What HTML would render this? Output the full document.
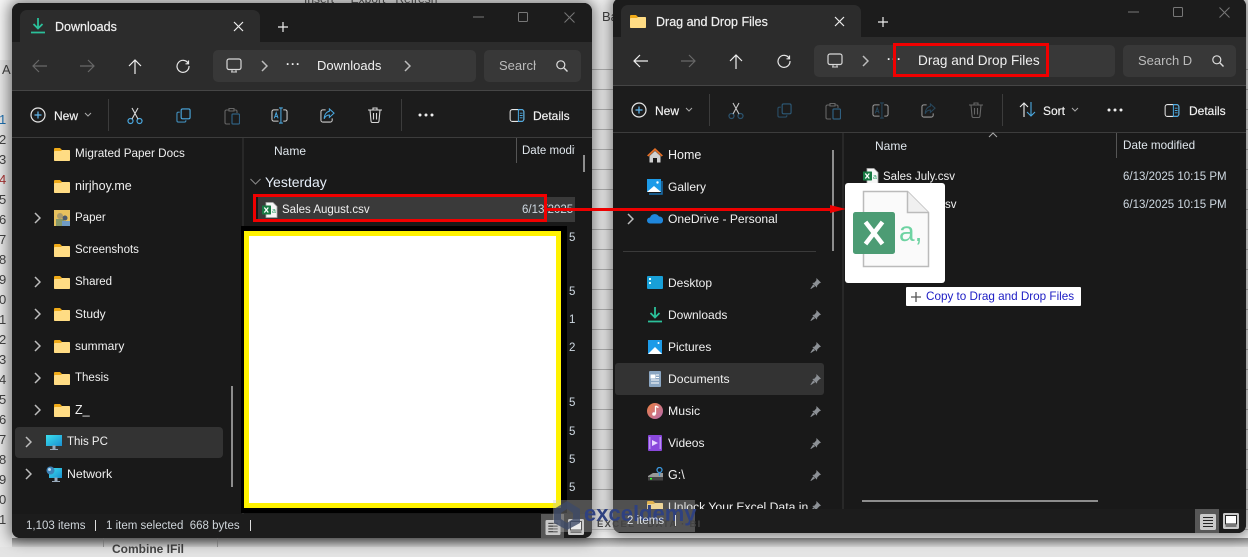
<!DOCTYPE html>
<html><head><meta charset="utf-8"><title>Drag and Drop Files</title>
<style>
html,body{margin:0;padding:0}
body{width:1248px;height:547px;overflow:hidden;position:relative;background:#e4e4e4;font-family:"Liberation Sans",sans-serif;font-size:12px;color:#f0f0f0}
.a,.t,svg{position:absolute}
.t{line-height:16px;white-space:nowrap}
.win{position:absolute;background:#191919;box-shadow:0 0 14px 3px rgba(0,0,0,.5);overflow:hidden}
.hl{position:absolute;background:#1c1c1c}
.n{color:#444;font-size:13px}
.f{font-size:11.5px}
</style></head><body>
<svg width="0" height="0" style="position:absolute">
<defs>
<symbol id="fo" viewBox="0 0 16 14"><path d="M0 2a1 1 0 0 1 1-1h5l2 2h7a1 1 0 0 1 1 1v9a1 1 0 0 1-1 1H1a1 1 0 0 1-1-1z" fill="#efaa18"/><path d="M0 5a1 1 0 0 1 1-1h6l1-1h7a1 1 0 0 1 1 1v9a1 1 0 0 1-1 1H1a1 1 0 0 1-1-1z" fill="#ffdc84"/></symbol>
<symbol id="ch" viewBox="0 0 8 12"><path d="M2 1l5 5-5 5" fill="none" stroke="#bdbdbd" stroke-width="1.5"/></symbol>
<symbol id="xl" viewBox="0 0 16 16"><path d="M4 .5h7l4 4v11H4z" fill="#f6f6f6" stroke="#aaa" stroke-width=".8"/><rect y="3.5" width="9" height="9" rx=".6" fill="#177a43"/><path d="M2.3 5.5l4 5m0-5l-4 5" stroke="#fff" stroke-width="1.3"/><text x="10" y="11" font-size="7" fill="#2f9e68" font-family="Liberation Sans">a</text></symbol>
<symbol id="pin" viewBox="0 0 12 12"><path d="M7 0l5 5-1.500 .6-2.500 2.500-.5 2.400-5-5 2.400-.5L7 2.500zM3.500 7l-3 4.500 .5 .5 4.500-3z" fill="#8c9095"/></symbol>
<symbol id="mon" viewBox="0 0 16 16"><rect x="1" y="1" width="14" height="10.500" rx="2" fill="none" stroke="#d8d8d8" stroke-width="1.2"/><path d="M5 14h6M6 12v2M10 12v2" stroke="#d8d8d8"/></symbol>
<symbol id="sc" viewBox="0 0 16 18"><circle cx="3.500" cy="14" r="2.500" fill="none" stroke="currentColor" stroke-width="1.200"/><circle cx="12.500" cy="14" r="2.500" fill="none" stroke="currentColor" stroke-width="1.200"/><path d="M5 12L11 1M11 12L5 1" fill="none" stroke="#d9d9d9" stroke-width="1.100"/></symbol>
<symbol id="cp" viewBox="0 0 16 16"><rect x="5.500" y="1" width="9.500" height="10.500" rx="1.500" fill="none" stroke="currentColor" stroke-width="1.200"/><path d="M4 4.500H2.500A1.500 1.500 0 0 0 1 6v7.500A1.500 1.500 0 0 0 2.500 15H9a1.500 1.500 0 0 0 1.500-1.500V13" fill="none" stroke="currentColor" stroke-width="1.200" opacity=".8"/></symbol>
<symbol id="pa" viewBox="0 0 16 18"><path d="M5 3H2.500A1.500 1.500 0 0 0 1 4.500v11A1.500 1.500 0 0 0 2.500 17H6M5 1.500h5V4H5zM10 3h1.500A1.500 1.500 0 0 1 13 4.500V6" fill="none" stroke="#666" stroke-width="1.100"/><rect x="8" y="7" width="7.500" height="10" rx="1" fill="none" stroke="#2f5f80" stroke-width="1.200"/></symbol>
<symbol id="re" viewBox="0 0 18 18"><path d="M8 3H3a2 2 0 0 0-2 2v8a2 2 0 0 0 2 2h5M13 3h2a2 2 0 0 1 2 2v8a2 2 0 0 1-2 2h-2" fill="none" stroke="#cfcfcf" stroke-width="1.100"/><path d="M8.500 1h4M10.500 1v16M8.500 17h4" fill="none" stroke="currentColor" stroke-width="1.100"/><path d="M3.500 12l2-6 2 6M4.300 10h2.500" fill="none" stroke="currentColor" stroke-width="1"/></symbol>
<symbol id="sh" viewBox="0 0 16 16"><path d="M6 2H3a2 2 0 0 0-2 2v9a2 2 0 0 0 2 2h8a2 2 0 0 0 2-2v-2" fill="none" stroke="#cfcfcf" stroke-width="1.100"/><path d="M10 1l5 4.500-5 4.500V7.500C7 7.500 5.500 9 4.500 11.500 4.500 7 7 4 10 3.500z" fill="none" stroke="currentColor" stroke-width="1.100"/></symbol>
<symbol id="tr" viewBox="0 0 14 16"><path d="M0 3h14M5 3V1h4v2M2 3l1 11a1.500 1.500 0 0 0 1.500 1.500h5A1.500 1.500 0 0 0 11 14l1-11M5.500 6v6.500M8.500 6v6.500" fill="none" stroke="currentColor" stroke-width="1.100"/></symbol>
<symbol id="de" viewBox="0 0 16 14"><rect x=".6" y=".6" width="14.800" height="12.800" rx="2.500" fill="none" stroke="#e6e6e6" stroke-width="1.100"/><path d="M9.500 .6h3.400a2.500 2.500 0 0 1 2.500 2.500v7.800a2.500 2.500 0 0 1-2.500 2.500H9.500z" fill="none" stroke="#4aa8e0" stroke-width="1.100"/><path d="M11 4.500h3M11 7h3M11 9.500h3" stroke="#4aa8e0"/></symbol>
<symbol id="nw" viewBox="0 0 16 16"><circle cx="8" cy="8" r="7" fill="none" stroke="#e6e6e6" stroke-width="1.200"/><path d="M8 4.500v7M4.500 8h7" stroke="#62b8f0" stroke-width="1.200"/></symbol>
<symbol id="vl" viewBox="0 0 16 16"><rect width="16" height="16" rx="1.500" fill="#c9c9c9"/><path d="M3 3.500h10M3 6.500h10M3 9.500h10M3 12.500h10" stroke="#222" stroke-width="1"/></symbol>
<symbol id="vt" viewBox="0 0 16 16"><rect width="16" height="16" rx="1.500" fill="#c9c9c9"/><rect x="2.500" y="2.500" width="11" height="8.500" fill="#fff" stroke="#222"/><path d="M2.500 13h11" stroke="#222"/></symbol>
<symbol id="rf" viewBox="0 0 14 14"><path d="M12.300 4.500A6 6 0 1 0 13 7M9.500 4.800h3V1.500" fill="none" stroke="#e6e6e6" stroke-width="1.200"/></symbol>
<symbol id="mg" viewBox="0 0 12 12"><circle cx="4.800" cy="4.800" r="4" fill="none" stroke="#dcdcdc" stroke-width="1.200"/><path d="M7.800 7.800L11.500 11.500" stroke="#dcdcdc" stroke-width="1.400"/></symbol>
<symbol id="dl" viewBox="0 0 14 16"><path d="M7 0v10M2.500 6L7 10.500 11.500 6M0 14.500h14" fill="none" stroke="#2bc09a" stroke-width="1.800"/></symbol>
</defs></svg>

<!-- background spreadsheet -->
<div class="a" style="left:0;top:0;width:1248px;height:547px;background:repeating-linear-gradient(180deg,#f4f4f4 0 19px,#b9b9b9 19px 20px);background-position:0 10px"></div>
<div class="a" style="left:0;top:0;width:1248px;height:60px;background:#f5f5f5"></div>
<div class="a" style="left:0;top:538px;width:1248px;height:9px;background:linear-gradient(180deg,#8d8d8d,#d5d5d5)"></div>
<div class="a" style="left:103px;top:538px;width:1px;height:9px;background:#999"></div>
<div class="a" style="left:217px;top:538px;width:1px;height:9px;background:#999"></div>
<div class="a" style="left:0;top:60px;width:12px;height:487px;background:#e8e8e8"></div>
<div class="t n" style="left:2px;top:62px">A</div>
<div class="t n" style="left:-1px;top:112px;color:#1c6fb0">1</div>
<div class="t n" style="left:-1px;top:132px">2</div>
<div class="t n" style="left:-1px;top:152px">3</div>
<div class="t n" style="left:-1px;top:172px;color:#a33">4</div>
<div class="t n" style="left:-1px;top:192px">5</div>
<div class="t n" style="left:-1px;top:212px">6</div>
<div class="t n" style="left:-1px;top:232px">7</div>
<div class="t n" style="left:-1px;top:252px">8</div>
<div class="t n" style="left:-1px;top:272px">9</div>
<div class="t n" style="left:-1px;top:292px">0</div>
<div class="t n" style="left:-1px;top:312px">1</div>
<div class="t n" style="left:-1px;top:332px">2</div>
<div class="t n" style="left:-1px;top:352px">3</div>
<div class="t n" style="left:-1px;top:372px">4</div>
<div class="t n" style="left:-1px;top:392px">5</div>
<div class="t n" style="left:-1px;top:412px">6</div>
<div class="t n" style="left:-1px;top:432px">7</div>
<div class="t n" style="left:-1px;top:452px">8</div>
<div class="t n" style="left:-1px;top:472px">9</div>
<div class="t n" style="left:-1px;top:492px">0</div>
<div class="t n" style="left:-1px;top:512px">1</div>
<div class="t" style="left:304px;top:-9px;color:#555">Insert &nbsp; &nbsp; Export &nbsp; Refresh</div>
<div class="t n" style="left:602px;top:9px">Ba</div>
<div class="t" style="left:112px;top:541px;font-weight:bold;color:#444">Combine IFil</div>

<!-- LEFT WINDOW -->
<div class="win" style="left:12px;top:3px;width:580px;height:535px;border-radius:8px">
<div class="hl" style="left:0;top:0;width:580px;height:39px"></div>
<div class="a" style="left:8px;top:7px;width:240px;height:32px;background:#2c2c2c;border-radius:7px 7px 0 0"></div>
<div class="a" style="left:0;top:39px;width:580px;height:48px;background:#2c2c2c"></div>
<div class="a" style="left:0;top:87px;width:580px;height:1px;background:#454545"></div>
<div class="hl" style="left:0;top:88px;width:580px;height:46px"></div>
<div class="a" style="left:0;top:134px;width:580px;height:1px;background:#3c3c3c"></div>
<div class="a" style="left:201px;top:47px;width:263px;height:32px;background:#383838;border-radius:5px"></div>
<div class="a" style="left:472px;top:47px;width:97px;height:32px;background:#383838;border-radius:5px"></div>
<div class="a" style="left:230px;top:135px;width:2px;height:376px;background:#282828"></div>
<div class="hl" style="left:0;top:511px;width:580px;height:24px"></div>
</div>
<svg style="left:31px;top:18px" width="14" height="16"><use href="#dl"/></svg>
<div class="t" style="left:55px;top:19px;font-size:12.500px;-webkit-text-stroke:.2px #f0f0f0">Downloads</div>
<svg style="left:233px;top:21px" width="11" height="11"><path d="M1 1l9 9m0-9l-9 9" stroke="#eee" stroke-width="1.200"/></svg>
<svg style="left:277px;top:21px" width="12" height="12"><path d="M6 1v10M1 6h10" stroke="#eee" stroke-width="1.200"/></svg>
<svg style="left:473px;top:16px" width="11" height="3"><path d="M0 1h11" stroke="#777"/></svg>
<svg style="left:518px;top:12px" width="10" height="10"><rect x=".5" y=".5" width="9" height="9" rx="1" fill="none" stroke="#777"/></svg>
<svg style="left:564px;top:12px" width="11" height="11"><path d="M.5 .5l10 10m0-10l-10 10" stroke="#777"/></svg>
<svg style="left:32px;top:59px" width="15" height="14"><path d="M15 7H1M7 1L1 7l6 6" fill="none" stroke="#686868" stroke-width="1.200"/></svg>
<svg style="left:80px;top:59px" width="15" height="14"><path d="M0 7h14M8 1l6 6-6 6" fill="none" stroke="#686868" stroke-width="1.200"/></svg>
<svg style="left:128px;top:59px" width="14" height="15"><path d="M7 15V1M1 7l6-6 6 6" fill="none" stroke="#eee" stroke-width="1.200"/></svg>
<svg style="left:176px;top:59px" width="14" height="14"><use href="#rf"/></svg>
<svg style="left:226px;top:58px" width="16" height="16"><use href="#mon"/></svg>
<svg style="left:260px;top:60px" width="8" height="12"><use href="#ch"/></svg>
<div class="t" style="left:286px;top:56px;font-size:12px;font-weight:bold;letter-spacing:1px">···</div>
<div class="t" style="left:317px;top:58px;font-size:13px">Downloads</div>
<svg style="left:403px;top:60px" width="8" height="12"><use href="#ch"/></svg>
<div class="t" style="left:499px;top:58px;width:37px;overflow:hidden;font-size:13px;color:#bbb">Search</div>
<svg style="left:556px;top:60px" width="12" height="12"><use href="#mg"/></svg>

<svg style="left:30px;top:107px" width="16" height="16"><use href="#nw"/></svg>
<div class="t" style="left:54px;top:108px;-webkit-text-stroke:.15px #fff">New</div>
<svg style="left:84px;top:112px" width="8" height="6"><path d="M1 1l3 3 3-3" fill="none" stroke="#aaa"/></svg>
<div class="a" style="left:108px;top:99px;width:1px;height:32px;background:#3c3c3c"></div>
<svg style="left:127px;top:107px;color:#4aa8e0" width="16" height="18"><use href="#sc"/></svg>
<svg style="left:176px;top:108px;color:#4aa8e0" width="15" height="15"><use href="#cp"/></svg>
<svg style="left:224px;top:107px" width="16" height="18"><use href="#pa"/></svg>
<svg style="left:271px;top:107px;color:#4aa8e0" width="17" height="17"><use href="#re"/></svg>
<svg style="left:320px;top:108px;color:#4aa8e0" width="15" height="15"><use href="#sh"/></svg>
<svg style="left:368px;top:107px;color:#d8d8d8" width="14" height="16"><use href="#tr"/></svg>
<div class="a" style="left:401px;top:99px;width:1px;height:32px;background:#3c3c3c"></div>
<svg style="left:418px;top:113px" width="16" height="4"><circle cx="2" cy="2" r="1.500" fill="#eee"/><circle cx="8" cy="2" r="1.500" fill="#eee"/><circle cx="14" cy="2" r="1.500" fill="#eee"/></svg>
<svg style="left:509px;top:109px" width="16" height="13"><use href="#de"/></svg>
<div class="t" style="left:533px;top:108px;-webkit-text-stroke:.15px #fff">Details</div>

<svg style="left:54px;top:147px" width="16" height="14"><use href="#fo"/></svg><div class="t" style="left:75px;top:146px;font-size:11.700px">Migrated Paper Docs</div>
<svg style="left:54px;top:179px" width="16" height="14"><use href="#fo"/></svg><div class="t" style="left:75px;top:178px;font-size:12.500px">nirjhoy.me</div>
<svg style="left:33px;top:212px" width="8" height="12"><use href="#ch"/></svg>
<svg style="left:54px;top:210px" width="16" height="16"><rect width="16" height="16" fill="#e7c15e"/><circle cx="6" cy="6" r="3" fill="#a99a6c"/><rect x="2" y="9" width="8" height="7" fill="#86986a"/><circle cx="11" cy="8" r="2.500" fill="#4b5a6c"/><rect x="8" y="11" width="8" height="5" fill="#6f9bc4"/></svg><div class="t f" style="left:75px;top:210px">Paper</div>
<svg style="left:54px;top:243px" width="16" height="14"><use href="#fo"/></svg><div class="t f" style="left:75px;top:242px">Screenshots</div>
<svg style="left:33px;top:276px" width="8" height="12"><use href="#ch"/></svg><svg style="left:54px;top:275px" width="16" height="14"><use href="#fo"/></svg><div class="t f" style="left:75px;top:274px">Shared</div>
<svg style="left:33px;top:308px" width="8" height="12"><use href="#ch"/></svg><svg style="left:54px;top:307px" width="16" height="14"><use href="#fo"/></svg><div class="t" style="left:75px;top:306px">Study</div>
<svg style="left:33px;top:340px" width="8" height="12"><use href="#ch"/></svg><svg style="left:54px;top:339px" width="16" height="14"><use href="#fo"/></svg><div class="t" style="left:75px;top:338px">summary</div>
<svg style="left:33px;top:372px" width="8" height="12"><use href="#ch"/></svg><svg style="left:54px;top:371px" width="16" height="14"><use href="#fo"/></svg><div class="t f" style="left:75px;top:370px">Thesis</div>
<svg style="left:33px;top:404px" width="8" height="12"><use href="#ch"/></svg><svg style="left:54px;top:403px" width="16" height="14"><use href="#fo"/></svg><div class="t" style="left:75px;top:402px;font-size:12.500px">Z_</div>
<div class="a" style="left:15px;top:427px;width:208px;height:31px;background:#333;border-radius:4px"></div>
<svg style="left:24px;top:436px" width="8" height="12"><use href="#ch"/></svg>
<svg style="left:46px;top:435px" width="16" height="16"><defs><linearGradient id="pc" x1="0" y1="0" x2="1" y2="1"><stop offset="0" stop-color="#3be0ee"/><stop offset="1" stop-color="#1a8fd0"/></linearGradient></defs><rect width="16" height="11" fill="url(#pc)"/><path d="M7 11h2v3H7zM4 14.500h8" stroke="#9ab" fill="#9ab"/></svg>
<div class="t f" style="left:67px;top:434px">This PC</div>
<svg style="left:24px;top:468px" width="8" height="12"><use href="#ch"/></svg>
<svg style="left:46px;top:466px" width="16" height="16"><rect x="3" y="2" width="13" height="10" fill="url(#pc)"/><circle cx="4.500" cy="4.500" r="4" fill="#3c83b8"/><circle cx="3.500" cy="3.500" r="1.500" fill="#b8d8f0"/><path d="M9 12h2v3H9zM6 15.500h8" stroke="#9ab" fill="#9ab"/></svg>
<div class="t" style="left:67px;top:466px;font-size:12.300px">Network</div>
<div class="a" style="left:231px;top:386px;width:2px;height:101px;background:#8d8d8d"></div>

<div class="t" style="left:274px;top:143px;color:#dfe6ec">Name</div>
<div class="a" style="left:516px;top:138px;width:1px;height:25px;background:#555"></div>
<div class="t f" style="left:522px;top:143px;width:53px;overflow:hidden;color:#dfe6ec">Date modified</div>
<div class="a" style="left:583px;top:155px;width:2px;height:17px;background:#8d8d8d"></div>
<svg style="left:250px;top:178px" width="11" height="8"><path d="M.5 1L5.500 6l5-5" fill="none" stroke="#888" stroke-width="1.100"/></svg>
<div class="t" style="left:265px;top:174px;font-size:14px;color:#e6eef8">Yesterday</div>
<div class="a" style="left:258px;top:197px;width:317px;height:25px;background:#3a3a3a"></div>
<svg style="left:262px;top:202px" width="16" height="16"><use href="#xl"/></svg>
<div class="t f" style="left:282px;top:202px">Sales August.csv</div>
<div class="t f" style="left:522px;top:202px;width:53px;overflow:hidden;color:#cfd9e2">6/13/2025</div>
<div class="a" style="left:253px;top:194px;width:288px;height:22px;border:3px solid #f10000"></div>
<div class="a" style="left:241px;top:226px;width:326px;height:287px;background:#000"></div>
<div class="a" style="left:244px;top:231px;width:307px;height:267px;background:#fff;border:5px solid #fff200"></div>
<div class="t f" style="left:569px;top:230px;color:#cfd9e2">5</div>
<div class="t f" style="left:569px;top:284px;color:#cfd9e2">5</div>
<div class="t f" style="left:569px;top:312px;color:#cfd9e2">1</div>
<div class="t f" style="left:569px;top:340px;color:#cfd9e2">2</div>
<div class="t f" style="left:569px;top:395px;color:#cfd9e2">5</div>
<div class="t f" style="left:569px;top:424px;color:#cfd9e2">5</div>
<div class="t f" style="left:569px;top:452px;color:#cfd9e2">5</div>
<div class="t f" style="left:569px;top:480px;color:#cfd9e2">5</div>
<div class="t f" style="left:26px;top:518px;color:#cfd5da">1,103 items</div>
<div class="a" style="left:95px;top:520px;width:1px;height:11px;background:#ddd"></div>
<div class="t f" style="left:106px;top:518px;color:#cfd5da">1 item selected &nbsp;668 bytes</div>
<div class="a" style="left:250px;top:520px;width:1px;height:11px;background:#ddd"></div>
<div class="a" style="left:541px;top:514px;width:23px;height:24px;background:#575757"></div>
<svg style="left:545px;top:520px" width="16" height="15"><use href="#vl"/></svg>
<svg style="left:568px;top:519px" width="16" height="16"><use href="#vt"/></svg>

<!-- RIGHT WINDOW -->
<div class="win" style="left:613px;top:-2px;width:633px;height:535px;border-radius:8px">
<div class="hl" style="left:0;top:0;width:633px;height:39px"></div>
<div class="a" style="left:8px;top:7px;width:240px;height:32px;background:#2c2c2c;border-radius:7px 7px 0 0"></div>
<div class="a" style="left:0;top:39px;width:633px;height:48px;background:#2c2c2c"></div>
<div class="a" style="left:0;top:87px;width:633px;height:1px;background:#454545"></div>
<div class="hl" style="left:0;top:88px;width:633px;height:46px"></div>
<div class="a" style="left:0;top:134px;width:633px;height:1px;background:#3c3c3c"></div>
<div class="a" style="left:201px;top:47px;width:301px;height:32px;background:#383838;border-radius:5px"></div>
<div class="a" style="left:510px;top:47px;width:113px;height:32px;background:#383838;border-radius:5px"></div>
<div class="a" style="left:229px;top:135px;width:2px;height:376px;background:#282828"></div>
<div class="hl" style="left:0;top:511px;width:633px;height:24px"></div>
</div>
<svg style="left:630px;top:14px" width="16" height="14"><use href="#fo"/></svg>
<div class="t" style="left:656px;top:14px;font-size:12.500px;-webkit-text-stroke:.2px #f0f0f0">Drag and Drop Files</div>
<svg style="left:834px;top:16px" width="11" height="11"><path d="M1 1l9 9m0-9l-9 9" stroke="#eee" stroke-width="1.200"/></svg>
<svg style="left:877px;top:16px" width="12" height="12"><path d="M6 1v10M1 6h10" stroke="#eee" stroke-width="1.200"/></svg>
<svg style="left:1128px;top:11px" width="11" height="3"><path d="M0 1h11" stroke="#777"/></svg>
<svg style="left:1173px;top:7px" width="10" height="10"><rect x=".5" y=".5" width="9" height="9" rx="1" fill="none" stroke="#777"/></svg>
<svg style="left:1219px;top:7px" width="11" height="11"><path d="M.5 .5l10 10m0-10l-10 10" stroke="#777"/></svg>
<svg style="left:633px;top:54px" width="15" height="14"><path d="M15 7H1M7 1L1 7l6 6" fill="none" stroke="#eee" stroke-width="1.200"/></svg>
<svg style="left:681px;top:54px" width="15" height="14"><path d="M0 7h14M8 1l6 6-6 6" fill="none" stroke="#686868" stroke-width="1.200"/></svg>
<svg style="left:729px;top:54px" width="14" height="15"><path d="M7 15V1M1 7l6-6 6 6" fill="none" stroke="#eee" stroke-width="1.200"/></svg>
<svg style="left:777px;top:54px" width="14" height="14"><use href="#rf"/></svg>
<svg style="left:827px;top:53px" width="16" height="16"><use href="#mon"/></svg>
<svg style="left:861px;top:55px" width="8" height="12"><use href="#ch"/></svg>
<div class="t" style="left:887px;top:51px;font-size:12px;font-weight:bold;letter-spacing:1px">···</div>
<div class="t" style="left:918px;top:53px;font-size:13.600px">Drag and Drop Files</div>
<div class="a" style="left:893px;top:43px;width:150px;height:28px;border:3px solid #f10000"></div>
<div class="t" style="left:1138px;top:53px;width:54px;overflow:hidden;font-size:13px;color:#bbb">Search Drag</div>
<svg style="left:1212px;top:55px" width="12" height="12"><use href="#mg"/></svg>

<svg style="left:631px;top:102px" width="16" height="16"><use href="#nw"/></svg>
<div class="t" style="left:655px;top:103px;-webkit-text-stroke:.15px #fff">New</div>
<svg style="left:685px;top:107px" width="8" height="6"><path d="M1 1l3 3 3-3" fill="none" stroke="#aaa"/></svg>
<div class="a" style="left:709px;top:94px;width:1px;height:32px;background:#3c3c3c"></div>
<svg style="left:728px;top:102px;color:#2d5a78;opacity:.9" width="16" height="18"><use href="#sc"/></svg>
<svg style="left:777px;top:103px;color:#2d5a78" width="15" height="15"><use href="#cp"/></svg>
<svg style="left:825px;top:102px" width="16" height="18"><use href="#pa"/></svg>
<svg style="left:872px;top:102px;color:#2d5a78;opacity:.7" width="17" height="17"><use href="#re"/></svg>
<svg style="left:921px;top:103px;color:#2d5a78;opacity:.7" width="15" height="15"><use href="#sh"/></svg>
<svg style="left:969px;top:102px;color:#666" width="14" height="16"><use href="#tr"/></svg>
<div class="a" style="left:1002px;top:94px;width:1px;height:32px;background:#3c3c3c"></div>
<svg style="left:1019px;top:102px" width="17" height="15"><path d="M5 15V1M1 5l4-4 4 4" fill="none" stroke="#eee" stroke-width="1.100"/><path d="M12 0v14M8 10l4 4 4-4" fill="none" stroke="#4aa8e0" stroke-width="1.100"/></svg>
<div class="t" style="left:1043px;top:103px;-webkit-text-stroke:.15px #fff">Sort</div>
<svg style="left:1071px;top:107px" width="8" height="6"><path d="M1 1l3 3 3-3" fill="none" stroke="#aaa"/></svg>
<svg style="left:1107px;top:108px" width="16" height="4"><circle cx="2" cy="2" r="1.500" fill="#eee"/><circle cx="8" cy="2" r="1.500" fill="#eee"/><circle cx="14" cy="2" r="1.500" fill="#eee"/></svg>
<svg style="left:1164px;top:104px" width="16" height="13"><use href="#de"/></svg>
<div class="t" style="left:1189px;top:103px;-webkit-text-stroke:.15px #fff">Details</div>

<svg style="left:647px;top:147px" width="16" height="16"><path d="M8 1L0 8.500l1.500 1L8 3.500l6.500 6 1.500-1z" fill="#e56f26"/><path d="M2.500 9L8 4l5.500 5v6.500H10V11H6v4.500H2.500z" fill="#cfcfcf"/></svg>
<div class="t" style="left:668px;top:147px;font-size:12.500px">Home</div>
<svg style="left:647px;top:179px" width="16" height="16"><rect width="14" height="13" fill="#1d9be8"/><path d="M0 13l7-6 7 6z" fill="#fff"/><circle cx="10.500" cy="3.500" r="1.200" fill="#fff"/><path d="M15 2v13H2" fill="none" stroke="#1970b0" stroke-width="1.500"/></svg>
<div class="t" style="left:668px;top:179px">Gallery</div>
<svg style="left:626px;top:213px" width="8" height="12"><use href="#ch"/></svg>
<svg style="left:647px;top:213px" width="16" height="11"><path d="M3 10.500A3 3 0 0 1 3 4.500 5 5 0 0 1 12 3.500 3.600 3.600 0 0 1 16 7.500 3 3 0 0 1 13.500 10.500z" fill="#1f87dc"/></svg>
<div class="t" style="left:668px;top:211px;font-size:12.100px">OneDrive - Personal</div>
<div class="a" style="left:623px;top:251px;width:193px;height:1px;background:#3a3a3a"></div>
<svg style="left:647px;top:276px" width="16" height="13"><rect width="16" height="13" rx="1" fill="#18a0d8"/><rect x="2" y="2" width="2" height="2" fill="#dff"/><rect x="2" y="6" width="2" height="2" fill="#dff"/></svg>
<div class="t" style="left:668px;top:275px">Desktop</div>
<svg style="left:648px;top:307px" width="14" height="16"><use href="#dl"/></svg>
<div class="t" style="left:668px;top:307px">Downloads</div>
<svg style="left:648px;top:340px" width="14" height="14"><rect width="14" height="14" fill="#1d9be8"/><path d="M0 14l7-7 7 7z" fill="#fff"/><circle cx="10.500" cy="3" r="1" fill="#fff"/></svg>
<div class="t" style="left:668px;top:339px">Pictures</div>
<div class="a" style="left:615px;top:363px;width:209px;height:32px;background:#333;border-radius:3px"></div>
<svg style="left:649px;top:371px" width="12" height="16"><rect width="12" height="16" rx="1" fill="#8ba6c2"/><path d="M2 4h4v3H2zM7 4h3M7 6.500h3M2 9h8M2 12h8" stroke="#fff" fill="#fff" stroke-width=".9"/></svg>
<div class="t" style="left:668px;top:371px;font-size:12.200px">Documents</div>
<svg style="left:647px;top:403px" width="16" height="16"><defs><linearGradient id="mu" x1="0" y1="0" x2="1" y2="1"><stop offset="0" stop-color="#ec8040"/><stop offset="1" stop-color="#b56ab0"/></linearGradient></defs><circle cx="8" cy="8" r="8" fill="url(#mu)"/><path d="M8.500 3v8" stroke="#fff" stroke-width="1.300"/><circle cx="7" cy="11" r="1.800" fill="#fff"/><path d="M8.500 3l3 1.500" stroke="#fff" stroke-width="1.300"/></svg>
<div class="t" style="left:668px;top:403px;font-size:12.300px">Music</div>
<svg style="left:648px;top:435px" width="14" height="16"><rect width="14" height="16" rx="1" fill="#8a48dc"/><path d="M4 5l6 3-6 3z" fill="#e8d8ff"/><rect x="1" y="2" width="1.500" height="12" fill="#d8c0ff" opacity=".6"/><rect x="11.500" y="2" width="1.500" height="12" fill="#d8c0ff" opacity=".6"/></svg>
<div class="t" style="left:668px;top:435px">Videos</div>
<svg style="left:648px;top:467px" width="15" height="16"><path d="M0 9l5-3h10v7H0z" fill="#999"/><rect y="10" width="15" height="3.500" fill="#444"/><rect x="2" y="11" width="2" height="1.500" fill="#3f3"/><circle cx="11.500" cy="3" r="2.500" fill="none" stroke="#3a96dc" stroke-width="1.300"/><path d="M11.500 5.500V9" stroke="#3a96dc" stroke-width="1.300"/></svg>
<div class="t" style="left:668px;top:467px;font-size:12.500px">G:\</div>
<svg style="left:647px;top:500px" width="16" height="9" viewBox="0 0 16 9"><use href="#fo" width="16" height="14"/></svg>
<div class="a" style="left:668px;top:500px;width:140px;height:9px;overflow:hidden"><div class="t" style="left:0;top:-1px;font-size:12.200px">Unlock Your Excel Data in Power</div></div>
<svg style="left:810px;top:278px" width="11" height="11"><use href="#pin"/></svg>
<svg style="left:810px;top:310px" width="11" height="11"><use href="#pin"/></svg>
<svg style="left:810px;top:342px" width="11" height="11"><use href="#pin"/></svg>
<svg style="left:810px;top:374px" width="11" height="11"><use href="#pin"/></svg>
<svg style="left:810px;top:406px" width="11" height="11"><use href="#pin"/></svg>
<svg style="left:810px;top:438px" width="11" height="11"><use href="#pin"/></svg>
<svg style="left:810px;top:470px" width="11" height="11"><use href="#pin"/></svg>
<svg style="left:810px;top:501px" width="11" height="8" viewBox="0 0 11 8"><use href="#pin" width="11" height="11"/></svg>
<div class="a" style="left:832px;top:150px;width:2px;height:101px;background:#8d8d8d"></div>
<svg style="left:988px;top:132px" width="10" height="6"><path d="M1 5l4-4 4 4" fill="none" stroke="#aaa"/></svg>
<div class="t" style="left:875px;top:138px;color:#dfe6ec">Name</div>
<div class="a" style="left:1116px;top:133px;width:1px;height:25px;background:#555"></div>
<div class="t" style="left:1123px;top:138px;font-size:11.700px;color:#dfe6ec">Date modified</div>
<svg style="left:863px;top:168px" width="16" height="16"><use href="#xl"/></svg>
<div class="t f" style="left:883px;top:169px">Sales July.csv</div>
<div class="t f" style="left:1123px;top:169px;color:#cfd9e2">6/13/2025 10:15 PM</div>
<div class="t f" style="left:945px;top:197px">sv</div>
<div class="t f" style="left:1123px;top:197px;color:#cfd9e2">6/13/2025 10:15 PM</div>
<div class="a" style="left:862px;top:500px;width:236px;height:2px;background:#8d8d8d"></div>
<div class="a" style="left:1195px;top:509px;width:24px;height:24px;background:#575757"></div>
<svg style="left:1200px;top:514px" width="16" height="16"><use href="#vl"/></svg>
<svg style="left:1223px;top:513px" width="16" height="16"><use href="#vt"/></svg>

<!-- connector across the two windows -->
<div class="a" style="left:546px;top:208px;width:286px;height:3px;background:#ee0000"></div>

<!-- drag preview -->
<svg style="left:830px;top:204px" width="16" height="10"><path d="M0 1l16 4-16 4z" fill="#ee0000"/></svg>
<div class="a" style="left:845px;top:183px;width:100px;height:100px;background:#fff;border-radius:3px"></div>
<svg style="left:845px;top:183px" width="100" height="100"><path d="M18.500 8.500h44l21 21v54h-65z" fill="#fafafa" stroke="#bbb" stroke-width="1.500"/><path d="M62.500 8.500v21h21" fill="#f0f0f0" stroke="#bbb" stroke-width="1.500"/><rect x="8" y="29" width="42" height="42" rx="2.500" fill="#4c9c74"/><path d="M20.500 39l17 22m0-22l-17 22" stroke="#fff" stroke-width="4.500"/></svg>
<div class="t" style="left:899px;top:216px;font-size:28px;line-height:32px;color:#6ed3a2">a,</div>
<div class="a" style="left:906px;top:287px;width:175px;height:19px;background:#fff;border-radius:1px"></div>
<svg style="left:911px;top:292px" width="10" height="10"><path d="M5 0v10M0 5h10" stroke="#555" stroke-width="1.300"/></svg>
<div class="t" style="left:926px;top:289px;color:#1c1cc4;font-size:11.700px">Copy to Drag and Drop Files</div>

<!-- watermark -->
<div class="a" style="left:553px;top:500px;width:142px;height:32px;background:rgba(200,200,200,.32)"></div>
<svg style="left:553px;top:500px" width="28" height="30"><path d="M14 1L27 9v14l-13 7-13-7V9zM14 9l-6 4v6l6 4 6-4v-6z" fill="#3d4a66" opacity=".8" fill-rule="evenodd"/></svg>
<div class="t" style="left:584px;top:502px;font-size:22px;line-height:24px;font-weight:bold;color:#2f4180">exceldemy</div>
<div class="t" style="left:597px;top:519px;font-size:9.500px;line-height:12px;font-weight:bold;letter-spacing:1.300px;color:#444">EXCEL · DATA · BI</div>
<div class="t f" style="left:627px;top:513px;color:#d8dde2">2 items</div>
<div class="a" style="left:675px;top:515px;width:1px;height:11px;background:#ddd"></div>
</body></html>
